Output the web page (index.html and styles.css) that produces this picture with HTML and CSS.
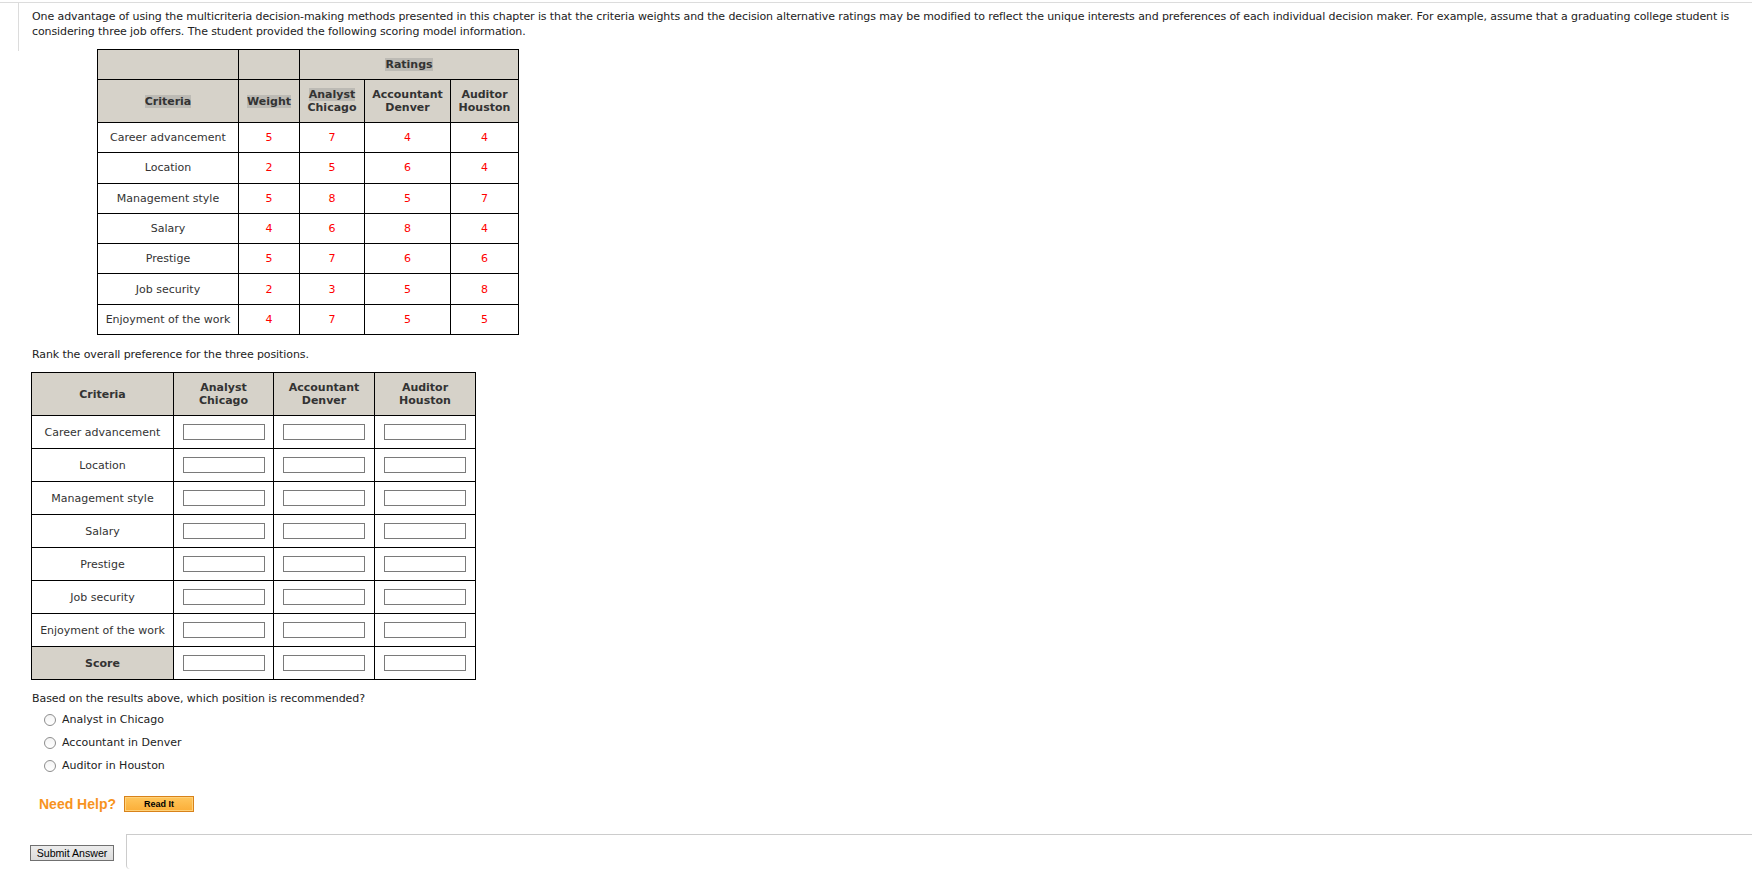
FILE: index.html
```html
<!DOCTYPE html>
<html>
<head>
<meta charset="utf-8">
<title>Scoring model</title>
<link rel="stylesheet" href="styles.css">
</head>
<body>
<div class="page">
  <div class="qrow">
    <div class="gutter"></div>
    <div class="question">
      <p class="intro">One advantage of using the multicriteria decision-making methods presented in this chapter is that the criteria weights and the decision alternative ratings may be modified to reflect the unique interests and preferences of each individual decision maker. For example, assume that a graduating college student is considering three job offers. The student provided the following scoring model information.</p>

      <table class="grid t1">
        <colgroup>
          <col class="t1c1"><col class="t1c2"><col class="t1c3"><col class="t1c4"><col class="t1c5">
        </colgroup>
        <tr class="r-top">
          <th></th>
          <th></th>
          <th colspan="3"><span class="hl">Ratings </span></th>
        </tr>
        <tr class="r-head">
          <th><span class="hl">Criteria </span></th>
          <th><span class="hl">Weight</span></th>
          <th><span class="hl">Analyst</span><br>Chicago</th>
          <th>Accountant<br>Denver</th>
          <th>Auditor<br>Houston</th>
        </tr>
        <tr class="r-data"><td>Career advancement</td><td class="num">5</td><td class="num">7</td><td class="num">4</td><td class="num">4</td></tr>
        <tr class="r-data"><td>Location</td><td class="num">2</td><td class="num">5</td><td class="num">6</td><td class="num">4</td></tr>
        <tr class="r-data"><td>Management style</td><td class="num">5</td><td class="num">8</td><td class="num">5</td><td class="num">7</td></tr>
        <tr class="r-data"><td>Salary</td><td class="num">4</td><td class="num">6</td><td class="num">8</td><td class="num">4</td></tr>
        <tr class="r-data"><td>Prestige</td><td class="num">5</td><td class="num">7</td><td class="num">6</td><td class="num">6</td></tr>
        <tr class="r-data"><td>Job security</td><td class="num">2</td><td class="num">3</td><td class="num">5</td><td class="num">8</td></tr>
        <tr class="r-data"><td>Enjoyment of the work</td><td class="num">4</td><td class="num">7</td><td class="num">5</td><td class="num">5</td></tr>
      </table>

      <p class="rank">Rank the overall preference for the three positions.</p>

      <table class="grid t2">
        <colgroup>
          <col class="t2c1"><col class="t2c2"><col class="t2c3"><col class="t2c4">
        </colgroup>
        <tr class="r-head">
          <th>Criteria</th>
          <th>Analyst<br>Chicago</th>
          <th>Accountant<br>Denver</th>
          <th>Auditor<br>Houston</th>
        </tr>
        <tr class="r-in"><td>Career advancement</td><td><input type="text"></td><td><input type="text"></td><td><input type="text"></td></tr>
        <tr class="r-in"><td>Location</td><td><input type="text"></td><td><input type="text"></td><td><input type="text"></td></tr>
        <tr class="r-in"><td>Management style</td><td><input type="text"></td><td><input type="text"></td><td><input type="text"></td></tr>
        <tr class="r-in"><td>Salary</td><td><input type="text"></td><td><input type="text"></td><td><input type="text"></td></tr>
        <tr class="r-in"><td>Prestige</td><td><input type="text"></td><td><input type="text"></td><td><input type="text"></td></tr>
        <tr class="r-in"><td>Job security</td><td><input type="text"></td><td><input type="text"></td><td><input type="text"></td></tr>
        <tr class="r-in"><td>Enjoyment of the work</td><td><input type="text"></td><td><input type="text"></td><td><input type="text"></td></tr>
        <tr class="r-in"><th>Score</th><td><input type="text"></td><td><input type="text"></td><td><input type="text"></td></tr>
      </table>

      <p class="ask">Based on the results above, which position is recommended?</p>
      <ul class="choices">
        <li><label><input type="radio" name="pos"><span>Analyst in Chicago</span></label></li>
        <li><label><input type="radio" name="pos"><span>Accountant in Denver</span></label></li>
        <li><label><input type="radio" name="pos"><span>Auditor in Houston</span></label></li>
      </ul>

      <div class="help">
        <span class="help-label">Need Help?</span>
        <button class="read-it" type="button">Read It</button>
      </div>
    </div>
  </div>

  <div class="submit-row">
    <div class="submit-cell">
      <button class="submit" type="button">Submit Answer</button>
    </div>
    <div class="tray"></div>
  </div>
</div>
</body>
</html>
```

FILE: styles.css
```css
html, body {
  margin: 0;
  padding: 0;
  background: #fff;
}

body {
  font-family: "DejaVu Sans", Verdana, sans-serif;
  font-size: 11px;
  color: #222;
}

.page {
  margin-top: 2px;
  border-top: 1px solid #dcdcdc;
}

.qrow {
  display: flex;
  align-items: flex-start;
}

.gutter {
  width: 18px;
  height: 48px;
  border-right: 1px solid #dcdcdc;
  flex: none;
}

.question {
  flex: 1;
  padding: 0 4px 0 13px;
}

.intro {
  margin: 6px 0 0;
  line-height: 15px;
  letter-spacing: -0.1px;
}

.grid {
  border-collapse: collapse;
  table-layout: fixed;
  color: #333;
}

.grid th,
.grid td {
  border: 1px solid #000;
  padding: 0;
  text-align: center;
  vertical-align: middle;
}

.grid th {
  background: #d6d2c9;
  font-weight: bold;
  line-height: 13px;
  color: #333;
}

.hl {
  background: #bcbab4;
}

.t1 {
  margin: 10px 0 0 65px;
  width: 422px;
}

.t1c1 { width: 141px; }
.t1c2 { width: 61px; }
.t1c3 { width: 65px; }
.t1c4 { width: 86px; }
.t1c5 { width: 68px; }

.t1 .r-top { height: 30px; }
.t1 .r-head { height: 43px; }
.t1 .r-data { height: 30.3px; }

.num {
  color: #f00;
}

.rank {
  margin: 12px 0 0;
  line-height: 15px;
  letter-spacing: -0.1px;
}

.t2 {
  margin: 10px 0 0 -1px;
  width: 445px;
}

.t2c1 { width: 142px; }
.t2c2 { width: 100px; }
.t2c3 { width: 101px; }
.t2c4 { width: 101px; }

.t2 .r-head { height: 43px; }
.t2 .r-in { height: 33px; }

.t2 input[type="text"] {
  box-sizing: border-box;
  width: 82px;
  height: 16px;
  padding: 0 2px;
  border: 1px solid #7a7a7a;
  font: inherit;
  display: block;
  margin: 0 auto;
  background: #fff;
}

.ask {
  margin: 11px 0 0;
  line-height: 15px;
  letter-spacing: -0.08px;
}

.choices {
  list-style: none;
  margin: 2px 0 0;
  padding: 0 0 0 12px;
}

.choices li {
  height: 23px;
  display: flex;
  align-items: center;
}

.choices label {
  display: flex;
  align-items: center;
  gap: 6px;
}

.choices input[type="radio"] {
  appearance: none;
  -webkit-appearance: none;
  margin: 0;
  width: 12px;
  height: 12px;
  border: 1px solid #8d8d8d;
  border-radius: 50%;
  background: linear-gradient(#f4f4f4, #fff);
  box-sizing: border-box;
}

.help {
  display: flex;
  align-items: center;
  gap: 8px;
  margin: 18px 0 0 7px;
  height: 17px;
}

.help-label {
  font-family: "Liberation Sans", Arial, sans-serif;
  font-weight: bold;
  font-size: 14px;
  color: #f7931e;
}

.read-it {
  box-sizing: border-box;
  width: 70px;
  height: 16px;
  padding: 0;
  border: 1px solid #d8821a;
  box-shadow: inset 0 0 0 1px #ffd27a;
  background: linear-gradient(#ffc65c, #fbae38);
  font-family: "Liberation Sans", Arial, sans-serif;
  font-weight: bold;
  font-size: 9px;
  color: #000;
}

.submit-row {
  display: flex;
  margin-top: 22px;
}

.submit-cell {
  width: 126px;
  flex: none;
  padding-top: 11px;
}

.submit {
  box-sizing: border-box;
  margin-left: 30px;
  width: 84px;
  height: 16px;
  padding: 0;
  border: 1px solid #707070;
  background: linear-gradient(#ececec, #dcdcdc);
  font-family: "Liberation Sans", Arial, sans-serif;
  font-size: 10.6px;
  color: #000;
}

.tray {
  flex: 1;
  height: 34px;
  border-top: 1px solid #cccccc;
  border-left: 1px solid #cccccc;
  border-bottom-left-radius: 4px;
}
```
